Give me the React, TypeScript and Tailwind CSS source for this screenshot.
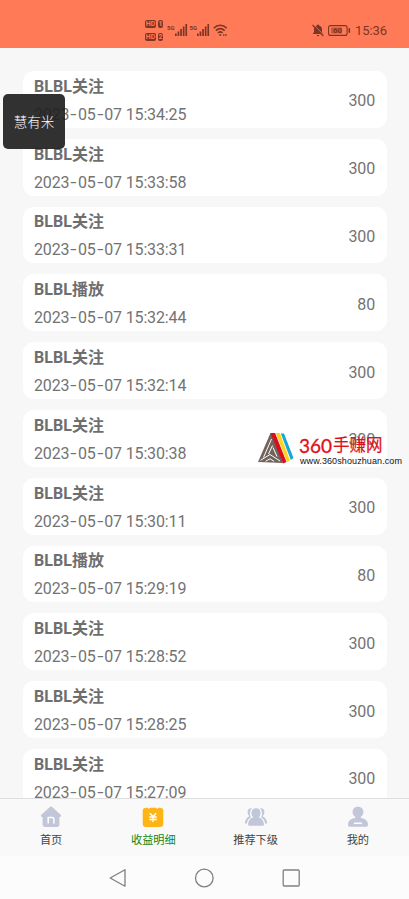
import { Fragment } from "react";

type Entry = {
  title: string;
  time: string;
  amount: number;
};

const ENTRIES: Entry[] = [
  { title: "BLBL关注", time: "2023-05-07 15:34:25", amount: 300 },
  { title: "BLBL关注", time: "2023-05-07 15:33:58", amount: 300 },
  { title: "BLBL关注", time: "2023-05-07 15:33:31", amount: 300 },
  { title: "BLBL播放", time: "2023-05-07 15:32:44", amount: 80 },
  { title: "BLBL关注", time: "2023-05-07 15:32:14", amount: 300 },
  { title: "BLBL关注", time: "2023-05-07 15:30:38", amount: 300 },
  { title: "BLBL关注", time: "2023-05-07 15:30:11", amount: 300 },
  { title: "BLBL播放", time: "2023-05-07 15:29:19", amount: 80 },
  { title: "BLBL关注", time: "2023-05-07 15:28:52", amount: 300 },
  { title: "BLBL关注", time: "2023-05-07 15:28:25", amount: 300 },
  { title: "BLBL关注", time: "2023-05-07 15:27:09", amount: 300 },
];

function HdBadge({ sim }: { sim: string }) {
  return (
    <div className="flex h-[8px] gap-[2px] text-[7px] font-bold leading-[8px] text-[#ff7b58]">
      <span className="w-[11px] rounded-[2px] bg-[#7d3525] text-center">HD</span>
      <span className="w-[5px] rounded-[2px] bg-[#7d3525] text-center">{sim}</span>
    </div>
  );
}

function Signal() {
  return (
    <div className="flex items-start">
      <span className="mt-px text-[6px] font-bold leading-[6px]">5G</span>
      <svg width="13" height="12" viewBox="0 0 13 12" fill="currentColor">
        <rect x="0" y="9.5" width="1.7" height="2.5" />
        <rect x="2.6" y="7.5" width="1.7" height="4.5" />
        <rect x="5.2" y="5" width="1.7" height="7" />
        <rect x="7.8" y="2.5" width="1.7" height="9.5" />
        <rect x="10.4" y="0" width="1.7" height="12" />
      </svg>
    </div>
  );
}

function StatusBar() {
  return (
    <header className="flex h-12 shrink-0 items-start bg-[#ff7b58] pt-[20px] text-[#7d3525]">
      <div className="ml-[145px] flex flex-col gap-[5px]">
        <HdBadge sim="1" />
        <HdBadge sim="2" />
      </div>
      <div className="ml-[4px] mt-[4px] flex gap-[2px]">
        <Signal />
        <Signal />
      </div>
      <svg className="ml-[3px] mt-[4px]" width="15" height="13" viewBox="0 0 15 13" fill="none" stroke="currentColor" strokeWidth="1.6">
        <path d="M.7 4.2C4.5.3 10 .3 13.8 4.2M2.8 6.6c2.7-2.5 6.2-2.5 8.9 0M4.9 9c1.4-1.3 3.3-1.3 4.7 0" />
        <circle cx="7.2" cy="11" r="1" fill="currentColor" stroke="none" />
        <path d="M10 11h1.500M12.200 11h1.500" />
      </svg>
      <svg className="ml-auto mt-[4px]" width="12" height="13" viewBox="0 0 12 13">
        <path d="M6 .5a1 1 0 0 1 1 1C9 2 10 3.500 10 5.500V8l1.300 2H.7L2 8V5.500c0-2 1-3.500 3-4a1 1 0 0 1 1-1ZM4.700 11h2.600a1.300 1.300 0 0 1-2.600 0Z" fill="currentColor" />
        <path d="M1.500.8 12 11.300" stroke="#ff7b58" strokeWidth="1" />
        <path d="m.5 1 10.800 11" stroke="currentColor" strokeWidth="1.200" />
      </svg>
      <svg className="ml-[4px] mt-[5px]" width="23" height="11" viewBox="0 0 23 11">
        <rect x=".6" y=".6" width="18.500" height="9.800" rx="2" fill="none" stroke="currentColor" strokeWidth="1.100" />
        <rect x="3" y="2.500" width="11" height="6" fill="currentColor" opacity=".45" />
        <text x="5" y="8.300" fontSize="8" fontWeight="700" fill="currentColor">60</text>
        <rect x="20.500" y="3" width="1.600" height="5" rx=".8" fill="currentColor" />
      </svg>
      <span className="ml-[4px] mr-[22px] mt-[2px] w-[32px] whitespace-nowrap text-[13px] leading-[18px] tracking-[-0.1px]">15:36</span>
    </header>
  );
}

// Date separators are drawn wider than the font's own hyphen
function Timestamp({ value }: { value: string }) {
  return (
    <div className="h-[28px] whitespace-nowrap text-[16px] leading-[31px] tracking-[-0.14px]">
      {value.split("-").map((part, i) => (
        <Fragment key={i}>
          {i > 0 && <span className="inline-block w-[8.5px] scale-x-140 text-center">-</span>}
          {part}
        </Fragment>
      ))}
    </div>
  );
}

function EntryCard({ entry }: { entry: Entry }) {
  return (
    <li className="flex h-[56.8px] shrink-0 items-center justify-between rounded-[11px] bg-white pl-[11px] pr-[12px] text-[#737373]">
      <div className="-mt-px">
        <div className="h-[28px] whitespace-nowrap text-[16px] font-bold leading-[31px] tracking-[0.07px] text-[#6e6e6e]">{entry.title}</div>
        <Timestamp value={entry.time} />
      </div>
      <span className="mt-[4px] text-[16px] leading-6 tracking-[-0.14px]">{entry.amount}</span>
    </li>
  );
}

function HomeIcon() {
  return (
    <svg width="22" height="22" viewBox="0 0 22 22">
      <path d="M9.300 1.400a2.500 2.500 0 0 1 3.400 0l7.700 7c1.300 1.200.8 2.600-1 2.600v7.500c0 1.500-.8 2.500-2.300 2.500H5c-1.500 0-2.400-1-2.400-2.500V11C.8 11 .3 9.600 1.600 8.400Z" fill="#c2c6d9" />
      <path d="M8.200 17.500V11.500h4.200c1 0 1.500.6 1.500 1.600v4.400" fill="none" stroke="#fff" strokeWidth="1.500" />
    </svg>
  );
}

function EarningsIcon() {
  return (
    <svg width="22" height="22" viewBox="0 0 22 22">
      <path d="M4 1.700h1.800a1 1 0 0 0 2 0h6.400a1 1 0 0 0 2 0H18c2 0 3.300 1.200 3.300 3V18c0 1.800-1.300 3-3.300 3H4c-2 0-3.300-1.200-3.300-3V4.700c0-1.800 1.300-3 3.300-3Z" fill="#fdb515" />
      <path d="m7.800 7.200 3.200 3.300 3.200-3.300M7.300 11h7.400M7.300 13.500h7.400M11 10.500V16" fill="none" stroke="#fff" strokeWidth="1.400" />
    </svg>
  );
}

function TeamIcon() {
  return (
    <svg width="24" height="22" viewBox="0 0 24 22" fill="#c2c6d9">
      <path d="M8 2.200C4.800 1.700 3.200 4 3.700 7c.2 1.300.8 2.400 1.600 3.200C2.500 11.500 1 14 .8 17.500h2.100c.4-3 1.700-5 4-6.100C5.500 9 5.300 4.800 8 2.200ZM16 2.200c3.200-.5 4.800 1.800 4.300 4.800-.2 1.300-.8 2.400-1.600 3.200 2.800 1.300 4.300 3.800 4.500 7.300h-2.100c-.4-3-1.700-5-4-6.100C18.500 9 18.700 4.800 16 2.200Z" />
      <path d="M12 2.200c2.800 0 4.600 2 4.600 4.800 0 1.800-.7 3.200-1.800 4.200 3.100 1 5 3.700 5.200 7.300 0 .8-.5 1.200-1.300 1.200H5.300c-.8 0-1.300-.4-1.300-1.200.2-3.600 2.100-6.300 5.200-7.300C8.100 10.200 7.400 8.800 7.400 7c0-2.800 1.800-4.800 4.600-4.800Z" />
    </svg>
  );
}

function ProfileIcon() {
  return (
    <svg width="22" height="22" viewBox="0 0 22 22" fill="#c2c6d9">
      <path d="M11 .8c3.300 0 5.400 2.200 5.400 5.200 0 2.300-1 4-2.700 4.900v1c4.500.5 7.300 3 7.300 6.600 0 1.600-.7 2.300-2 2.300H3c-1.300 0-2-.7-2-2.300 0-3.600 2.800-6.100 7.300-6.600v-1C6.600 10 5.600 8.300 5.600 6c0-3 2.100-5.200 5.400-5.200Z" />
      <path d="M7 17.300h8" stroke="#fff" strokeWidth="1.600" />
    </svg>
  );
}

const TABS = [
  { label: "首页", icon: <HomeIcon /> },
  { label: "收益明细", icon: <EarningsIcon />, active: true },
  { label: "推荐下级", icon: <TeamIcon /> },
  { label: "我的", icon: <ProfileIcon /> },
];

function TabBar() {
  return (
    <nav className="grid h-[58px] shrink-0 grid-cols-4 border-t border-[#dedede] bg-[#f9f9f9]">
      {TABS.map((tab) => (
        <div key={tab.label} className="flex flex-col items-center pt-[7px]">
          {tab.icon}
          <span className={"mt-[5px] whitespace-nowrap text-[11.2px] leading-4 " + (tab.active ? "text-[#128512]" : "text-[#444]")}>
            {tab.label}
          </span>
        </div>
      ))}
    </nav>
  );
}

function SystemNav() {
  return (
    <div className="flex h-[43px] shrink-0 items-center bg-[#fcfcfc] pl-[108px] text-[#808080]">
      <svg width="20" height="20" viewBox="0 0 20 20" fill="none" stroke="currentColor" strokeWidth="1.300" strokeLinejoin="round">
        <path d="M17 1.800v16.400L2.200 10Z" />
      </svg>
      <svg className="ml-[66px]" width="20" height="20" viewBox="0 0 20 20" fill="none" stroke="currentColor" strokeWidth="1.300">
        <circle cx="10.300" cy="10" r="8.800" />
      </svg>
      <svg className="ml-[67px]" width="20" height="20" viewBox="0 0 20 20" fill="none" stroke="currentColor" strokeWidth="1.300">
        <rect x="2.200" y="2" width="16" height="16" rx="1" />
      </svg>
    </div>
  );
}

function SiteMark() {
  return (
    <div className="absolute left-[258px] top-[432px] flex whitespace-nowrap">
      <svg width="37" height="33" viewBox="0 0 37 33">
        <path d="M12.500 1h2L25 31 0 30Z" fill="#70645d" />
        {/* Nested triangular grooves */}
        <path d="M13.500 7 5.500 25.500M14.500 13.500l-4 8.500M2.500 28.300l9.500-5.800 10 6.500M7.500 29.300l4.500-2.500 4 2.500M15 15.500l4 9" fill="none" stroke="#fff" strokeWidth="1" />
        <path d="M12.500 1h4.600L28.500 30l-3.500 1.500Z" fill="#d8101d" />
        <path d="M17.800 1h4L32 28.500 29 30Z" fill="#ffd21c" />
        <path d="M22.800 1.500h3.200L35.500 26 32.800 28Z" fill="#16a7d8" />
      </svg>
      <div className="ml-[4px] mt-[3px]">
        <div className="flex h-[21px] items-center text-[#df1018]">
          <span className="w-[34px] text-[19px] leading-[21px] font-['Lato',sans-serif] [-webkit-text-stroke:0.3px]">360</span>
          <span className="text-[16.5px] leading-[21px] [-webkit-text-stroke:0.2px]">手赚网</span>
        </div>
        <div className="ml-px h-[11px] text-[9px] leading-[10px] tracking-[0.1px] text-[#111] font-['Liberation_Sans',sans-serif]">www.360shouzhuan.com</div>
      </div>
    </div>
  );
}

export default function App() {
  return (
    <div className="relative flex h-[899px] w-[409px] flex-col overflow-hidden bg-[#f7f7f7] font-['Roboto','Noto_Sans_CJK_SC',sans-serif]">
      <StatusBar />
      <main className="min-h-0 flex-1 overflow-hidden">
        <ul className="flex flex-col gap-[11px] pl-[23px] pr-[22px] pt-[23px]">
          {ENTRIES.map((entry) => (
            <EntryCard key={entry.time} entry={entry} />
          ))}
        </ul>
      </main>
      <TabBar />
      <SystemNav />

      {/* Floating toast sits above the list */}
      <div className="absolute left-[3px] top-[94px] flex h-[55px] w-[62px] items-center justify-center rounded-[5px] bg-[#202020]/92 pt-px text-[13.5px] font-light text-white">
        慧有米
      </div>
      <SiteMark />
    </div>
  );
}
